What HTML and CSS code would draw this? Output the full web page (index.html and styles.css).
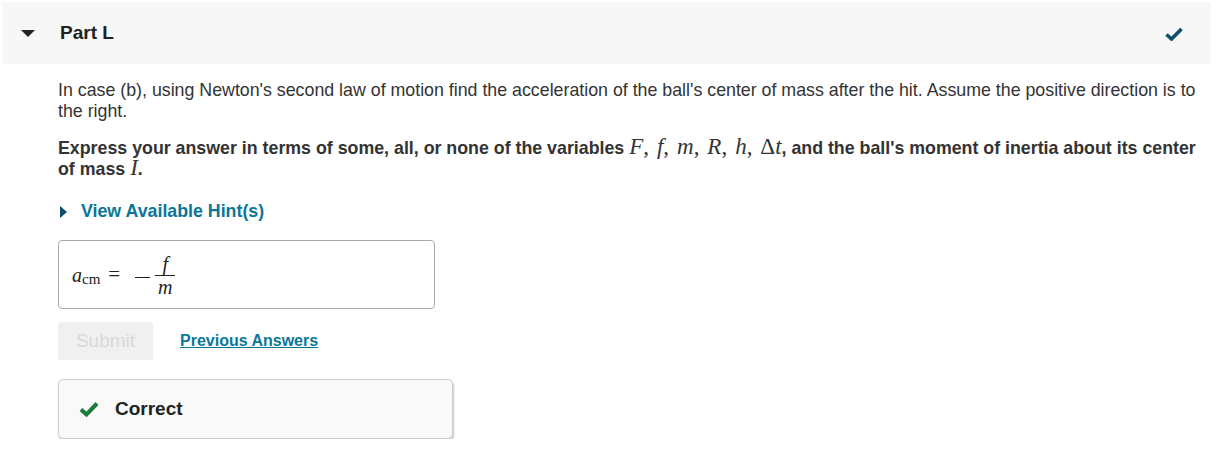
FILE: index.html
```html
<!DOCTYPE html>
<html lang="en">
<head>
    <meta charset="UTF-8">
    <title>Part L</title>
    <link rel="stylesheet" href="styles.css">
</head>
<body>

<div class="part">
    <div class="part-header">
        <span class="caret-down"></span>
        <h2>Part L</h2>
        <svg class="done" width="18" height="14" viewBox="0 0 18 14">
            <path d="M1.5 7.5 L6.5 12 L16.5 2" fill="none" stroke="#0b4f6c" stroke-width="3.6"/>
        </svg>
    </div>

    <div class="part-body">
        <p>In case (b), using Newton's second law of motion find the acceleration of the ball's center of mass after the hit. Assume the positive direction is to the right.</p>
        <p class="bold">Express your answer in terms of some, all, or none of the variables <span class="m">F</span><span class="mr c">,</span> <span class="m">f</span><span class="mr c">,</span> <span class="m">m</span><span class="mr c">,</span> <span class="m">R</span><span class="mr c">,</span> <span class="m">h</span><span class="mr c">,</span> <span class="mr">&Delta;</span><span class="m">t</span>, and the ball's moment of inertia about its center of mass <span class="m">I</span>.</p>

        <a class="hint" href="#"><span class="caret-right"></span>View Available Hint(s)</a>

        <div class="answer">
            <span class="m">a</span><span class="sub">cm</span>
            <span class="eq">=</span>
            <span class="minus"></span>
            <span class="frac">
                <span class="num m">f</span>
                <span class="den m">m</span>
            </span>
        </div>

        <div class="actions">
            <button class="submit" disabled>Submit</button>
            <a class="prev" href="#">Previous Answers</a>
        </div>

        <div class="feedback">
            <svg width="20" height="16" viewBox="0 0 20 16">
                <path d="M2 8.5 L7.5 13.5 L18 2.5" fill="none" stroke="#1c7a3a" stroke-width="4"/>
            </svg>
            <span>Correct</span>
        </div>
    </div>
</div>

</body>
</html>
```

FILE: styles.css
```css
body {
    margin: 0;
    font-family: "Liberation Sans", Arial, sans-serif;
    font-size: 17.8px;
    color: #333;
    background: #fff;
}
.part {
    padding: 2px 7px 0 2px;
}
.part-header {
    display: flex;
    align-items: center;
    height: 62px;
    background: #f7f7f7;
    padding: 0 28px 0 19px;
}
.part-header h2 {
    margin: 0 0 0 25px;
    font-size: 19px;
    font-weight: bold;
    color: #222;
    flex: 1;
}
.caret-down {
    width: 0;
    height: 0;
    border-left: 7px solid transparent;
    border-right: 7px solid transparent;
    border-top: 7px solid #222;
}
.done {
    margin-top: 2px;
}
.part-body {
    padding: 16px 0 0 56px;
}
.part-body p {
    margin: 0 0 16px;
    line-height: 21px;
}
.bold {
    font-weight: bold;
}
.m {
    font-family: "Liberation Serif", "Times New Roman", serif;
    font-style: italic;
    font-weight: normal;
    font-size: 23px;
    line-height: 0;
}
.mr {
    font-family: "Liberation Serif", "Times New Roman", serif;
    font-weight: normal;
    font-size: 23px;
    line-height: 0;
}
.c {
    margin-right: 3px;
}
.hint {
    display: flex;
    align-items: center;
    width: max-content;
    margin-top: 21px;
    line-height: 21px;
    color: #0a7799;
    font-weight: bold;
    text-decoration: none;
}
.caret-right {
    width: 0;
    height: 0;
    border-top: 6px solid transparent;
    border-bottom: 6px solid transparent;
    border-left: 7px solid #0b4f6c;
    margin: 0 14px 0 2px;
}
.answer {
    display: flex;
    align-items: center;
    width: 377px;
    height: 69px;
    margin-top: 18px;
    padding-left: 13px;
    border: 1px solid #aaa;
    border-radius: 4px;
    box-sizing: border-box;
    color: #222;
}
.answer .m {
    font-size: 20px;
    line-height: 1;
}
.sub {
    font-family: "Liberation Serif", "Times New Roman", serif;
    font-size: 15px;
    margin-top: 9px;
}
.eq {
    margin: 0 15px 0 8px;
    font-family: "Liberation Serif", serif;
    font-size: 21px;
}
.minus {
    width: 15px;
    height: 1px;
    margin: 6px 5px 0 0;
    background: #222;
}
.frac {
    display: inline-flex;
    flex-direction: column;
    align-items: stretch;
    width: 20px;
    margin-top: 2px;
    text-align: center;
}
.frac .num {
    padding-bottom: 3px;
    border-bottom: 1px solid #222;
    line-height: 16px;
}
.frac .den {
    padding-top: 3px;
    line-height: 16px;
}
.actions {
    display: flex;
    align-items: center;
    margin-top: 13px;
}
.submit {
    width: 95px;
    height: 38px;
    border: none;
    border-radius: 3px;
    background: #f0f0f0;
    color: #d8d8d8;
    font-family: "Liberation Sans", Arial, sans-serif;
    font-size: 19px;
}
.prev {
    margin-left: 27px;
    font-size: 16px;
    color: #0a7799;
    font-weight: bold;
    text-decoration: underline;
}
.feedback {
    display: flex;
    align-items: center;
    width: 395px;
    height: 60px;
    margin-top: 19px;
    padding-left: 20px;
    box-sizing: border-box;
    background: #f9f9f9;
    border: 1px solid #ccc;
    border-radius: 5px;
    box-shadow: 1px 2px 2px #c8c8c8;
}
.feedback span {
    margin-left: 16px;
    font-size: 19px;
    font-weight: bold;
    color: #222;
}
```
